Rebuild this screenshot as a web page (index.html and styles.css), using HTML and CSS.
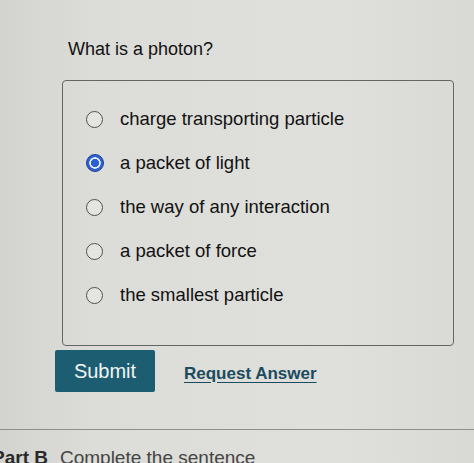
FILE: index.html
```html
<!DOCTYPE html>
<html>
<head>
<meta charset="utf-8">
<link rel="stylesheet" href="styles.css">
</head>
<body>
<div class="page">
  <h1 class="question">What is a photon?</h1>
  <div class="choices">
    <label class="choice"><span class="radio"></span><span class="label">charge transporting particle</span></label>
    <label class="choice"><span class="radio checked"></span><span class="label">a packet of light</span></label>
    <label class="choice"><span class="radio"></span><span class="label">the way of any interaction</span></label>
    <label class="choice"><span class="radio"></span><span class="label">a packet of force</span></label>
    <label class="choice"><span class="radio"></span><span class="label">the smallest particle</span></label>
  </div>
  <div class="actions">
    <button class="submit">Submit</button>
    <a class="request" href="#">Request Answer</a>
  </div>
  <div class="divider"></div>
  <div class="part"><span class="part-title">Part B</span><span class="part-text">Complete the sentence</span></div>
</div>
</body>
</html>
```
FILE: styles.css
```css
html, body {
  margin: 0;
  padding: 0;
  background: #dcdcd8;
  overflow: hidden;
}
body {
  width: 474px;
  height: 463px;
  font-family: "Liberation Sans", Arial, sans-serif;
  color: #121212;
  background: linear-gradient(90deg, #d3d3cf 0%, #dcdcd8 20%, #dfdfdb 70%, #d9d9d5 100%);
}
.page {
  padding-top: 37px;
}
.question {
  margin: 0 0 0 68px;
  font-size: 18px;
  font-weight: normal;
  line-height: 24px;
}
.choices {
  margin: 19px 0 0 62px;
  width: 392px;
  border: 1px solid #656563;
  border-radius: 4px;
  padding: 16px 0 27px 23px;
  box-sizing: border-box;
  height: 266px;
  display: flex;
  flex-direction: column;
}
.choice {
  display: flex;
  align-items: center;
  height: 44px;
  gap: 17px;
  font-size: 18.5px;
}
.radio {
  width: 17px;
  height: 17px;
  border: 1.6px solid #505050;
  border-radius: 50%;
  box-sizing: border-box;
  background: #e4e4e0;
  flex: none;
}
.radio.checked {
  width: 18px;
  height: 18px;
  margin-left: -0.5px;
  margin-right: -0.5px;
  border: 1.5px solid #1d3a8c;
  background: radial-gradient(circle, #2b5fd4 0 3.8px, #f2f2f2 4.4px 5.4px, #2d63d8 6px);
}
.actions {
  display: flex;
  align-items: center;
  gap: 29px;
  margin: 4px 0 0 55px;
}
.submit {
  width: 100px;
  height: 42px;
  border: none;
  border-radius: 2px;
  background: #1c5d72;
  color: #f2f4f4;
  font-family: "Liberation Sans", Arial, sans-serif;
  font-size: 20px;
  padding: 0;
}
.request {
  color: #1b4b5e;
  font-weight: bold;
  font-size: 17px;
  text-decoration: underline;
  text-underline-offset: 3px;
  margin-top: 6px;
}
.divider {
  margin-top: 37px;
  height: 1px;
  background: #8e8e8c;
}
.part {
  margin: 17px 0 0 -8px;
  font-size: 19px;
  line-height: 22px;
  white-space: nowrap;
}
.part-title {
  font-weight: bold;
  color: #2a2a2a;
  margin-right: 12px;
}
.part-text {
  color: #444;
}
```
